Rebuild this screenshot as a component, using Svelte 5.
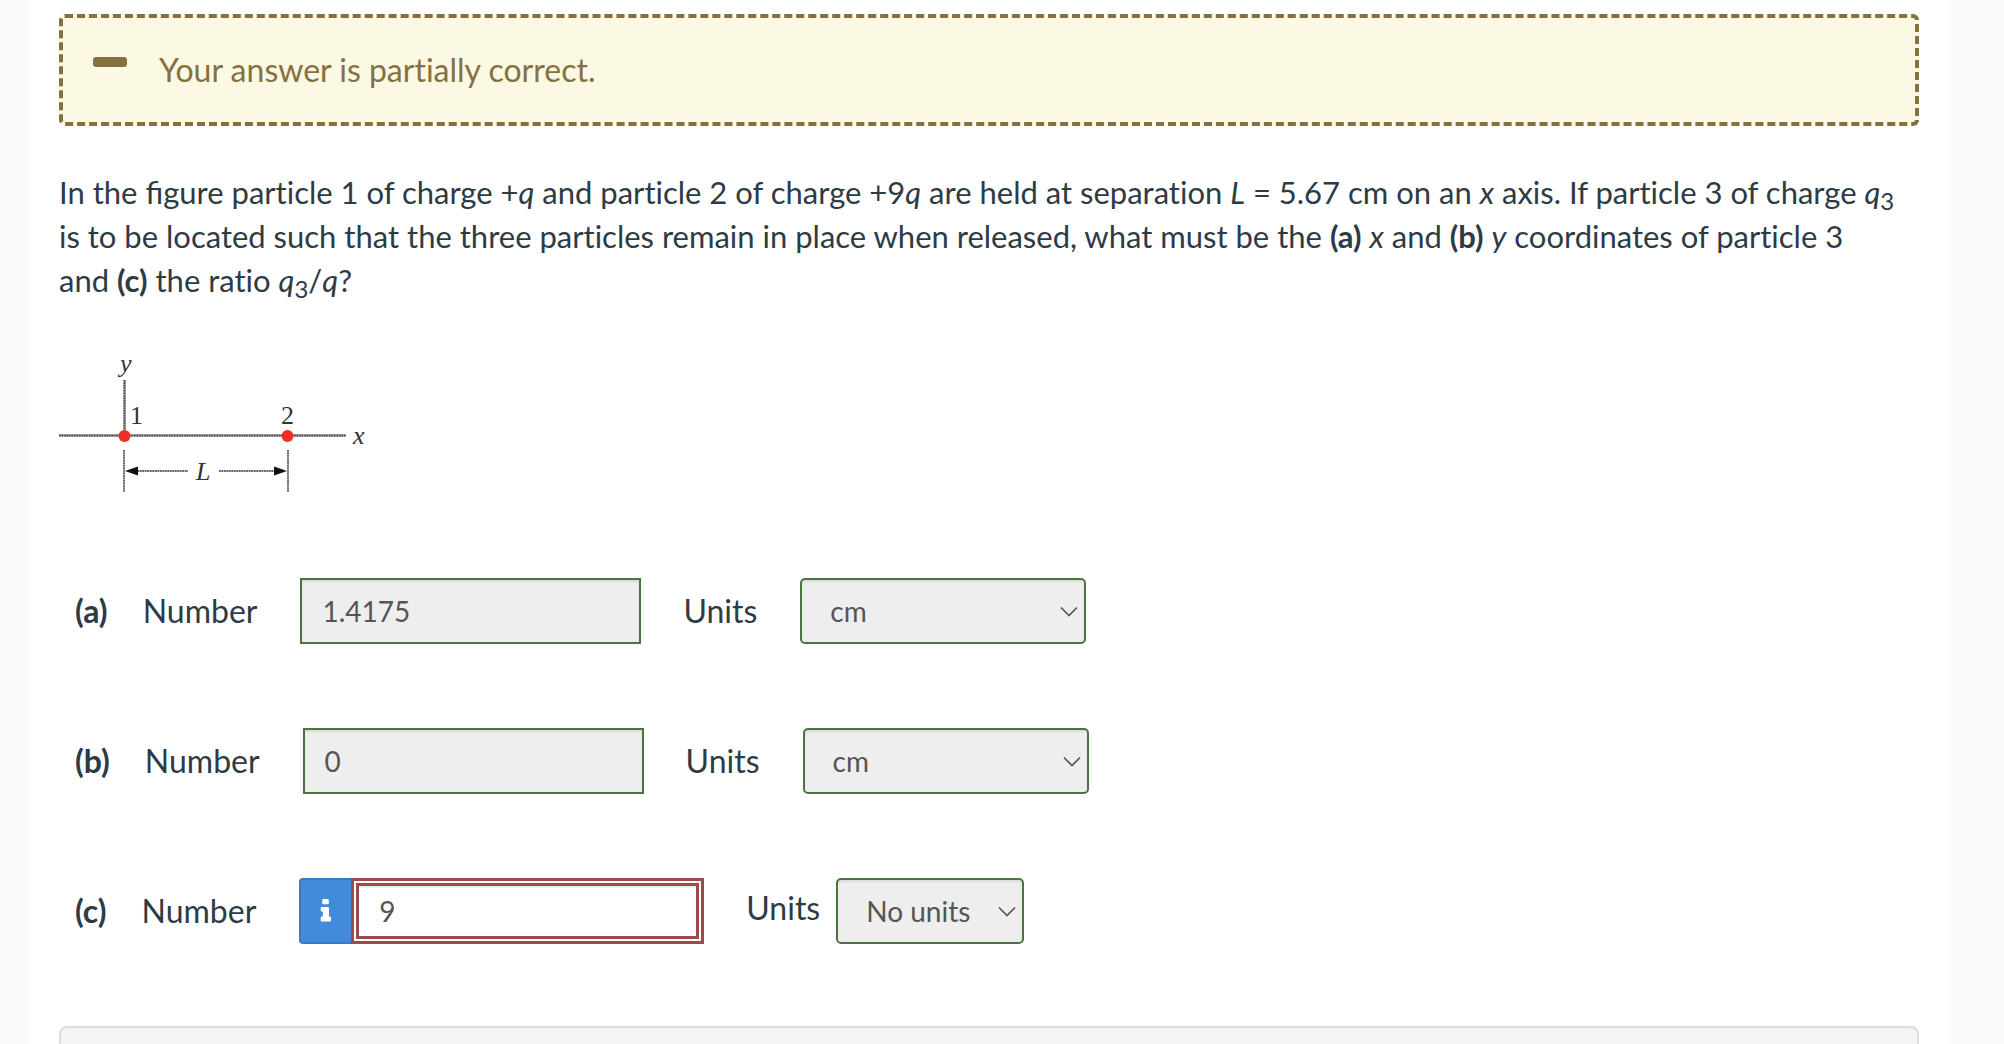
<script>
  let answerA = $state('1.4175');
  let answerB = $state('0');
  let answerC = $state('9');
</script>

{#snippet chevron()}
  <svg class="chevron" viewBox="0 0 18 12" aria-hidden="true">
    <path d="M1 1.5 L9 9.5 L17 1.5" fill="none" stroke="#555" stroke-width="1.7" />
  </svg>
{/snippet}

<main class="sheet">
  <div class="notice" role="status">
    <span class="minus" aria-hidden="true"></span>
    <span>Your answer is partially correct.</span>
  </div>

  <p class="question">
    In the <span class="joined">figure</span> particle 1 of charge +<i>q</i> and particle 2 of charge +9<i>q</i> are held at separation <i>L</i> = 5.67 cm on an <i>x</i> axis. If particle 3 of charge <i>q</i><sub>3</sub> is to be located such that the three particles remain in place when released, what must be the <b>(a)</b> <i>x</i> and <b>(b)</b> <i>y</i> coordinates of particle 3 and <b>(c)</b> the ratio <i>q</i><sub>3</sub>/<i>q</i>?
  </p>

  <svg class="figure" width="310" height="152" viewBox="0 -8 310 152" role="img" aria-label="Particles 1 and 2 on an x axis, a distance L apart">
    <g fill="none" stroke="#a6a6a6" stroke-width="3">
      <path d="M0 85.5H287" />
      <path d="M65.5 30V84" />
    </g>
    <g fill="none" stroke="#444" stroke-width="1.4" stroke-dasharray="1.5 1">
      <path d="M0 85.5H287" />
      <path d="M65.5 30V84" />
    </g>
    <g fill="none" stroke="#bbb" stroke-width="2">
      <path d="M65 100V142" />
      <path d="M229 100V142" />
      <path d="M76 121H129" />
      <path d="M160 121H218" />
    </g>
    <g fill="none" stroke="#444" stroke-width="1.4" stroke-dasharray="1.5 1">
      <path d="M65 100V142" />
      <path d="M229 100V142" />
      <path d="M76 121H129" />
      <path d="M160 121H218" />
    </g>
    <path d="M66 121L79 116.5V125.5Z M228 121L215 116.5V125.5Z" fill="#111" />
    <circle cx="65.5" cy="86" r="6" fill="#ee3124" />
    <circle cx="228.5" cy="86" r="6" fill="#ee3124" />
    <g class="marks">
      <text class="it" x="61" y="22">y</text>
      <text x="71" y="74">1</text>
      <text x="222" y="74">2</text>
      <text class="it" x="294" y="94">x</text>
      <text class="it" x="137" y="130">L</text>
    </g>
  </svg>

  <div class="answers">
    <div class="row">
      <b>(a)</b>
      <label class="number" for="num-a">Number</label>
      <input id="num-a" class="field" type="text" bind:value={answerA} readonly />
      <label class="units" for="unit-a">Units</label>
      <span class="picker">
        <select id="unit-a"><option>cm</option></select>
        {@render chevron()}
      </span>
    </div>

    <div class="row">
      <b>(b)</b>
      <label class="number" for="num-b">Number</label>
      <input id="num-b" class="field" type="text" bind:value={answerB} readonly />
      <label class="units" for="unit-b">Units</label>
      <span class="picker">
        <select id="unit-b"><option>cm</option></select>
        {@render chevron()}
      </span>
    </div>

    <div class="row">
      <b>(c)</b>
      <label class="number" for="num-c">Number</label>
      <span class="group">
        <button class="info" type="button" aria-label="Information">
          <svg width="12" height="24" viewBox="0 0 12 24" aria-hidden="true">
            <path fill="#fff" d="M3.2 0h4.6a1 1 0 0 1 1 1v3.2a1 1 0 0 1-1 1H3.2a1 1 0 0 1-1-1V1a1 1 0 0 1 1-1z M1.6 8h6.5a.9.9 0 0 1 .9.9V17.600h1.200a.9.9 0 0 1 .9.900v3a.9.9 0 0 1-.9.9H1.600a.9.9 0 0 1-.9-.900v-3a.9.9 0 0 1 .9-.9h1.200V12.500H1.600a.9.9 0 0 1-.9-.9V8.900A.9.9 0 0 1 1.600 8z" />
          </svg>
        </button>
        <input id="num-c" class="wrong" type="text" bind:value={answerC} />
      </span>
      <label class="units near" for="unit-c">Units</label>
      <span class="picker small">
        <select id="unit-c"><option>No units</option></select>
        {@render chevron()}
      </span>
    </div>
  </div>

  <section class="panel" aria-label="Resources"></section>
</main>

<style>
  :global(body) {
    background: #fafafa;
  }

  .sheet {
    box-sizing: border-box;
    min-height: 100vh;
    margin: 0 55px 0 29px;
    padding: 14px 30px 0;
    background: #fff;
    color: #2d3b45;
    font: 32px/44px Lato, sans-serif;
    font-variant-ligatures: none;
  }

  .notice {
    display: flex;
    align-items: center;
    gap: 32px;
    box-sizing: border-box;
    min-height: 112px;
    padding: 0 30px;
    border: 4px dashed #86703f;
    border-radius: 6px;
    background: #fbf8e4;
    color: #86703f;
  }

  .minus {
    width: 34px;
    height: 10px;
    margin-bottom: 16px;
    border-radius: 3px;
    background: #86703f;
  }

  .question {
    margin: 44px 0 40px;
    padding-right: 20px;
    font-size: 31px;
  }

  .joined {
    font-variant-ligatures: normal;
  }

  sub {
    font-size: 24px;
    line-height: 0;
    vertical-align: -6px;
  }

  .figure {
    display: block;
  }

  .marks {
    fill: #333;
    font: 26px 'Liberation Serif', serif;
  }

  .it {
    font-style: italic;
  }

  .answers {
    display: flex;
    flex-direction: column;
    gap: 84px;
    margin: 84px 0 82px;
    padding-left: 16px;
  }

  .row {
    display: flex;
    align-items: center;
  }

  .number {
    margin: 0 43px 0 35px;
  }

  .units {
    margin: 0 43px 0 42px;
  }

  .near {
    margin-right: 16px;
    padding-bottom: 6px;
  }

  input,
  select {
    box-sizing: border-box;
    height: 66px;
    margin: 0;
    border: 2px solid #4a7541;
    border-radius: 0;
    background: #eee;
    box-shadow: inset 0 2px 2px rgba(0, 0, 0, 0.075);
    color: #555;
    font: 28px Lato, sans-serif;
    outline: none;
  }

  .field {
    width: 341px;
    padding: 0 20px;
  }

  .picker {
    position: relative;
    width: 286px;
  }

  .small {
    width: 188px;
  }

  select {
    display: block;
    width: 100%;
    padding: 0 40px 0 28px;
    border-radius: 5px;
    appearance: none;
  }

  .chevron {
    position: absolute;
    top: 28px;
    right: 8px;
    width: 18px;
    height: 12px;
    pointer-events: none;
  }

  .group {
    display: flex;
  }

  .info {
    display: flex;
    align-items: center;
    justify-content: center;
    box-sizing: border-box;
    width: 52px;
    height: 66px;
    padding: 0;
    border: 2px solid #357ebd;
    border-right: 0;
    border-radius: 4px 0 0 4px;
    background: #428bdc;
  }

  .wrong {
    width: 353px;
    padding: 0 20px;
    border: 8px double #9d4b48;
    background: #fff;
  }

  .panel {
    height: 16px;
    border: 2px solid #ddd;
    border-bottom: 0;
    border-radius: 8px 8px 0 0;
    background: #f4f4f4;
  }
</style>
